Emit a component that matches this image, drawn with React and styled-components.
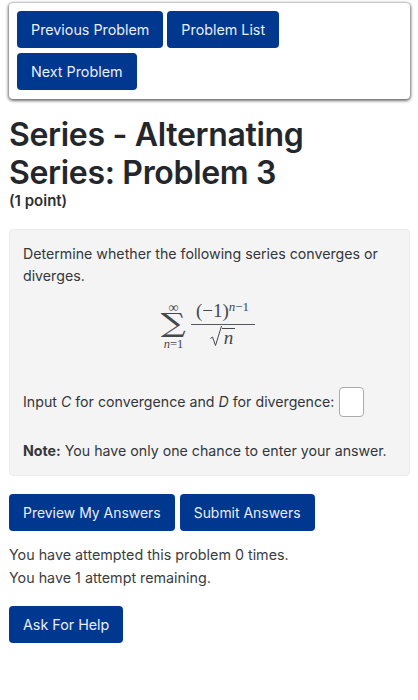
import React from "react";
import styled, { createGlobalStyle } from "styled-components";

const Global = createGlobalStyle`
  html, body { margin: 0; padding: 0; background: #fff; }
  body { font-family: Inter, "Liberation Sans", sans-serif; color: #212529; }
`;

const Page = styled.div`
  width: 418px;
  height: 700px;
  overflow: hidden;
  padding: 3px 8px 0 9px;
  box-sizing: border-box;
`;

const Toolbar = styled.nav`
  display: flex;
  flex-wrap: wrap;
  gap: 5px 4px;
  box-sizing: border-box;
  width: 401px;
  height: 96px;
  padding: 8px 100px 8px 8px;
  background: #fff;
  border-radius: 4px;
  box-shadow: 0 1px 3px 1px rgba(0, 0, 0, 0.55), 0 0 2px rgba(0, 0, 0, 0.12);
  align-content: flex-start;
`;

const Button = styled.button`
  height: 37px;
  padding: 0 14px;
  border: 0;
  border-radius: 4px;
  background: #00378f;
  color: #e9eef7;
  font-family: Inter, "Liberation Sans", sans-serif;
  font-size: ${(p) => p.$size || 14.3}px;
  line-height: 37px;
  white-space: nowrap;
`;

const Title = styled.h1`
  margin: 17px 0 0;
  font-size: 32px;
  line-height: 38px;
  font-weight: 600;
  letter-spacing: -0.32px;
  color: #23262b;
`;

const Points = styled.div`
  margin-top: -1px;
  font-size: 15px;
  line-height: 20px;
  font-weight: 600;
  color: #2c2f33;
`;

const ProblemBox = styled.section`
  box-sizing: border-box;
  width: 401px;
  height: 247px;
  margin-top: 18px;
  padding: 13px 13px 0;
  background: #f4f4f5;
  border: 1px solid #ececec;
  border-radius: 4px;
  font-size: 14.2px;
  line-height: 22px;
  color: #33363a;
`;

const Paragraph = styled.p`
  margin: 0;
`;

const Formula = styled.div`
  display: flex;
  justify-content: center;
  align-items: flex-start;
  gap: 4px;
  height: 62px;
  margin-top: 8px;
  padding-right: 4px;
  font-family: "Liberation Serif", serif;
  color: #44474b;
`;

const Sum = styled.div`
  display: flex;
  flex-direction: column;
  align-items: center;
  width: 26px;
  margin-top: 8px;
`;

const Infinity = styled.span`
  font-size: 14px;
  line-height: 9px;
  height: 9px;
`;

const SumGlyph = styled.span`
  display: inline-block;
  font-family: "DejaVu Serif", serif;
  font-size: 26px;
  line-height: 25px;
  height: 25px;
  transform: translateY(-1px) scaleX(1.35);
`;

const Limit = styled.span`
  font-size: 12.5px;
  line-height: 13px;
  margin-top: 1px;
`;

const Fraction = styled.div`
  display: flex;
  flex-direction: column;
  align-items: center;
  width: 64px;
  margin-top: 3px;
`;

const Numerator = styled.div`
  height: 27px;
  width: 100%;
  box-sizing: border-box;
  border-bottom: 1px solid #55585c;
  text-align: center;
  font-size: 19px;
  line-height: 26px;
  white-space: nowrap;
`;

const Sup = styled.sup`
  font-size: 13px;
  line-height: 0;
  vertical-align: 6px;
`;

const Denominator = styled.div`
  display: flex;
  align-items: flex-end;
  height: 21px;
  padding-top: 1px;
  font-size: 19px;
  font-style: italic;
  line-height: 20px;
`;

const Radical = styled.span`
  border-top: 1px solid #44474b;
  padding: 0 2px;
  line-height: 18px;
`;

const InputRow = styled.div`
  display: flex;
  align-items: center;
  gap: 5px;
  margin-top: 30px;
  height: 30px;
`;

const AnswerBox = styled.input`
  box-sizing: border-box;
  width: 25px;
  height: 30px;
  padding: 0;
  border: 1px solid #a9abae;
  border-radius: 4px;
  background: #fff;
`;

const Note = styled.p`
  margin: 23px 0 0;
`;

const Actions = styled.div`
  display: flex;
  gap: 5px;
  margin-top: 18px;
`;

const Attempts = styled.div`
  margin-top: 12px;
  font-size: 14.3px;
  line-height: 23px;
  color: #3a3d41;
`;

const Help = styled.div`
  margin-top: 17px;
`;

export default function App() {
  return (
    <Page>
      <Global />
      <Toolbar>
        <Button>Previous Problem</Button>
        <Button>Problem List</Button>
        <Button>Next Problem</Button>
      </Toolbar>
      <Title>
        Series - Alternating
        <br />
        Series: Problem 3
      </Title>
      <Points>(1 point)</Points>
      <ProblemBox>
        <Paragraph>Determine whether the following series converges or diverges.</Paragraph>
        <Formula>
          <Sum>
            <Infinity>∞</Infinity>
            <SumGlyph>∑</SumGlyph>
            <Limit>
              <i>n</i>=1
            </Limit>
          </Sum>
          <Fraction>
            <Numerator>
              (−1)
              <Sup>
                <i>n</i>−1
              </Sup>
            </Numerator>
            <Denominator>
              <svg width="12" height="22" viewBox="0 0 12 22" aria-hidden="true">
                <path d="M0.5 13.5 L2.5 12 L5.5 20.5 L11.5 1" fill="none" stroke="#44474b" strokeWidth="1" />
              </svg>
              <Radical>n</Radical>
            </Denominator>
          </Fraction>
        </Formula>
        <InputRow>
          <span>
            Input <i>C</i> for convergence and <i>D</i> for divergence:
          </span>
          <AnswerBox aria-label="answer" />
        </InputRow>
        <Note>
          <b>Note:</b> You have only one chance to enter your answer.
        </Note>
      </ProblemBox>
      <Actions>
        <Button $size={13.95}>Preview My Answers</Button>
        <Button $size={13.95}>Submit Answers</Button>
      </Actions>
      <Attempts>
        You have attempted this problem 0 times.
        <br />
        You have 1 attempt remaining.
      </Attempts>
      <Help>
        <Button>Ask For Help</Button>
      </Help>
    </Page>
  );
}
